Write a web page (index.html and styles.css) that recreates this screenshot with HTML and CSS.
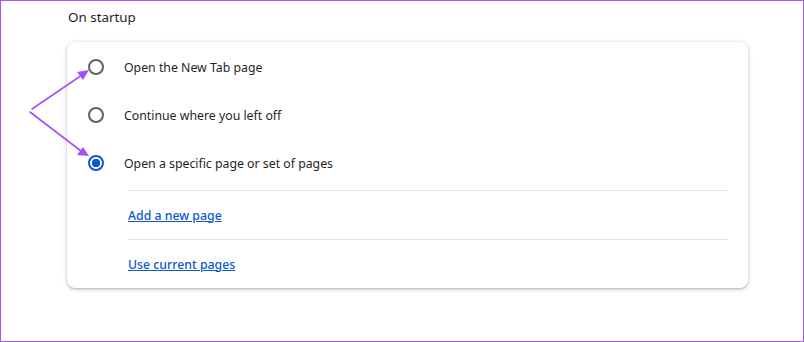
FILE: index.html
```html
<!DOCTYPE html>
<html>
<head>
    <title>On startup</title>
    <link rel="stylesheet" href="styles.css">
</head>
<body>
    <div class="page">
        <h2 class="section-title">On startup</h2>

        <div class="card">
            <label class="option">
                <span class="radio"></span>
                <span class="option-label">Open the New Tab page</span>
            </label>
            <label class="option">
                <span class="radio"></span>
                <span class="option-label">Continue where you left off</span>
            </label>
            <label class="option">
                <span class="radio checked"></span>
                <span class="option-label">Open a specific page or set of pages</span>
            </label>

            <div class="links">
                <div class="link-row"><a href="#">Add a new page</a></div>
                <div class="link-row"><a href="#">Use current pages</a></div>
            </div>
        </div>

        <!-- annotation arrows -->
        <svg class="arrows" width="100" height="180" viewBox="0 0 100 180">
            <g stroke="#a94ff6" stroke-width="1.6" fill="none" stroke-linecap="round">
                <line x1="32" y1="109" x2="82" y2="75" />
                <line x1="30" y1="112" x2="81" y2="151" />
            </g>
            <g fill="#a94ff6">
                <polygon points="89,70 77,72 83,80" />
                <polygon points="89,156 77,155 83,147" />
            </g>
        </svg>
    </div>
</body>
</html>
```

FILE: styles.css
```css
* {
    box-sizing: border-box;
}
body {
    margin: 0;
    font-family: 'Noto Sans', 'Open Sans', sans-serif;
    color: #1f1f1f;
    background: #fff;
}
.page {
    position: relative;
    width: 804px;
    height: 342px;
    border: 1px solid #a855f7;
    padding: 6px 0 0 66px;
}
.section-title {
    margin: 0 0 15px 1px;
    font-size: 13.4px;
    font-weight: 400;
    line-height: 20px;
}
.card {
    width: 681px;
    background: #fff;
    border-radius: 8px;
    box-shadow: 0 1px 2px rgba(60, 64, 67, .3), 0 1px 4px 1px rgba(60, 64, 67, .15);
    padding: 1px 20px 0 20px;
}
.option {
    display: flex;
    align-items: center;
    height: 48px;
    font-size: 12.3px;
}
.radio {
    width: 16px;
    height: 16px;
    margin-left: 1px;
    margin-right: 20px;
    border: 2px solid #5f6368;
    border-radius: 50%;
    flex-shrink: 0;
}
.radio.checked {
    border-color: #0b57d0;
    background: radial-gradient(circle, #0b57d0 0 4px, #fff 4.5px);
}
.links {
    margin-left: 41px;
    margin-top: 3px;
}
.link-row {
    height: 49px;
    display: flex;
    align-items: center;
    border-top: 1px solid #e3e3e3;
    font-size: 12.3px;
}
.link-row a {
    color: #0b57d0;
    font-weight: 500;
}
.arrows {
    position: absolute;
    left: -1px;
    top: -1px;
}
```
